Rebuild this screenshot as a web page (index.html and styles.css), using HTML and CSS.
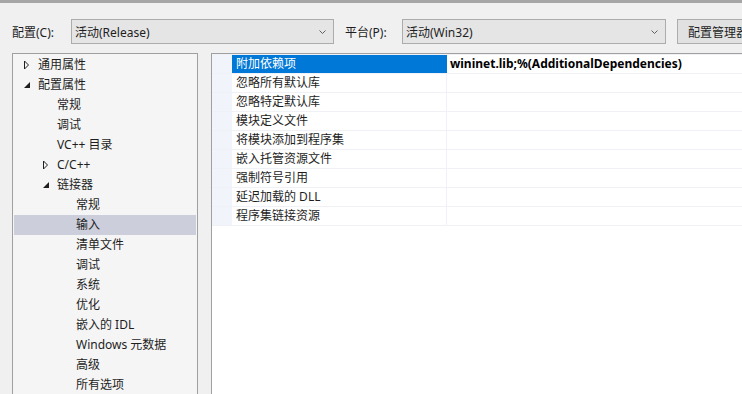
FILE: index.html
```html
<!DOCTYPE html>
<html lang="zh-CN">

<head>
    <meta charset="UTF-8">
    <title>属性页</title>
    <link rel="stylesheet" href="styles.css">
</head>

<body>
    <div class="topline"></div>
    <div class="toolbar">
        <span class="label">配置(C):</span>
        <div class="combo combo-config">
            <span>活动(Release)</span>
            <svg class="chev" width="7" height="4" viewBox="0 0 7 4"><path d="M0.5 0.5 L3.5 3.5 L6.5 0.5" fill="none" stroke="#606060" stroke-width="1"/></svg>
        </div>
        <span class="label label-plat">平台(P):</span>
        <div class="combo combo-plat">
            <span>活动(Win32)</span>
            <svg class="chev" width="7" height="4" viewBox="0 0 7 4"><path d="M0.5 0.5 L3.5 3.5 L6.5 0.5" fill="none" stroke="#606060" stroke-width="1"/></svg>
        </div>
        <button class="btn">配置管理器(O)...</button>
    </div>

    <div class="main">
        <div class="tree">
            <div class="node lvl0"><span class="tog"><svg width="6" height="10" viewBox="0 0 6 10"><path d="M0.5 1 L4.5 5 L0.5 9 Z" fill="none" stroke="#1e1e1e"/></svg></span>通用属性</div>
            <div class="node lvl0"><span class="tog"><svg width="6" height="10" viewBox="0 0 6 10"><path d="M6 2 L6 8 L0 8 Z" fill="#1e1e1e"/></svg></span>配置属性</div>
            <div class="node lvl1"><span class="tog"></span>常规</div>
            <div class="node lvl1"><span class="tog"></span>调试</div>
            <div class="node lvl1"><span class="tog"></span>VC++ 目录</div>
            <div class="node lvl1"><span class="tog"><svg width="6" height="10" viewBox="0 0 6 10"><path d="M0.5 1 L4.5 5 L0.5 9 Z" fill="none" stroke="#1e1e1e"/></svg></span>C/C++</div>
            <div class="node lvl1"><span class="tog"><svg width="6" height="10" viewBox="0 0 6 10"><path d="M6 2 L6 8 L0 8 Z" fill="#1e1e1e"/></svg></span>链接器</div>
            <div class="node lvl2"><span class="tog"></span>常规</div>
            <div class="node lvl2 sel"><span class="tog"></span>输入</div>
            <div class="node lvl2"><span class="tog"></span>清单文件</div>
            <div class="node lvl2"><span class="tog"></span>调试</div>
            <div class="node lvl2"><span class="tog"></span>系统</div>
            <div class="node lvl2"><span class="tog"></span>优化</div>
            <div class="node lvl2"><span class="tog"></span>嵌入的 IDL</div>
            <div class="node lvl2"><span class="tog"></span>Windows 元数据</div>
            <div class="node lvl2"><span class="tog"></span>高级</div>
            <div class="node lvl2"><span class="tog"></span>所有选项</div>
        </div>

        <div class="props">
            <div class="grid">
                <div class="row sel">
                    <div class="cat"></div>
                    <div class="name">附加依赖项</div>
                    <div class="value">wininet.lib;%(AdditionalDependencies)</div>
                </div>
                <div class="row">
                    <div class="cat"></div>
                    <div class="name">忽略所有默认库</div>
                    <div class="value"></div>
                </div>
                <div class="row">
                    <div class="cat"></div>
                    <div class="name">忽略特定默认库</div>
                    <div class="value"></div>
                </div>
                <div class="row">
                    <div class="cat"></div>
                    <div class="name">模块定义文件</div>
                    <div class="value"></div>
                </div>
                <div class="row">
                    <div class="cat"></div>
                    <div class="name">将模块添加到程序集</div>
                    <div class="value"></div>
                </div>
                <div class="row">
                    <div class="cat"></div>
                    <div class="name">嵌入托管资源文件</div>
                    <div class="value"></div>
                </div>
                <div class="row">
                    <div class="cat"></div>
                    <div class="name">强制符号引用</div>
                    <div class="value"></div>
                </div>
                <div class="row">
                    <div class="cat"></div>
                    <div class="name">延迟加载的 DLL</div>
                    <div class="value"></div>
                </div>
                <div class="row">
                    <div class="cat"></div>
                    <div class="name">程序集链接资源</div>
                    <div class="value"></div>
                </div>
            </div>
        </div>
    </div>
</body>

</html>
```

FILE: styles.css
```css
html,
body {
    margin: 0;
    height: 100%;
    overflow: hidden;
}

body {
    display: flex;
    flex-direction: column;
    background: #f0f0f0;
    font-family: "Noto Sans", "Noto Sans CJK SC", sans-serif;
    font-size: 12px;
    color: #1e1e1e;
}

.topline {
    flex-shrink: 0;
    height: 3px;
    background: #a6a6a6;
}

.toolbar {
    flex-shrink: 0;
    display: flex;
    align-items: center;
    height: 25px;
    margin-top: 16px;
    padding-left: 12px;
    white-space: nowrap;
}

.toolbar > * {
    flex-shrink: 0;
}

.label {
    width: 59px;
}

.label-plat {
    width: 57px;
    margin-left: 11px;
}

.combo {
    box-sizing: border-box;
    height: 25px;
    display: flex;
    align-items: center;
    justify-content: space-between;
    padding: 0 7px 0 3px;
    background: #e5e5e5;
    border: 1px solid #acacac;
}

.combo-config {
    width: 263px;
}

.combo-plat {
    width: 264px;
}

.chev {
    margin-top: 1px;
}

.btn {
    box-sizing: border-box;
    height: 25px;
    margin-left: 11px;
    padding: 0 0 0 10px;
    background: #e1e1e1;
    border: 1px solid #adadad;
    font: inherit;
    color: #1e1e1e;
    text-align: left;
    width: 120px;
}

.main {
    flex: 1;
    min-height: 0;
    display: flex;
    margin-top: 9px;
    padding-left: 12px;
}

.tree {
    box-sizing: border-box;
    flex-shrink: 0;
    width: 186px;
    padding-top: 1px;
    background: #f5f5f5;
    border: 1px solid #a0a0a0;
    border-bottom: none;
}

.node {
    height: 20px;
    line-height: 20px;
    display: flex;
    align-items: center;
    white-space: nowrap;
    margin: 0 1px;
}

.node.sel {
    background: #cccedb;
}

.lvl0 {
    padding-left: 10px;
}

.lvl1 {
    padding-left: 29px;
}

.lvl2 {
    padding-left: 48px;
}

.tog {
    width: 14px;
    height: 20px;
    display: flex;
    align-items: center;
}

.props {
    flex: 1;
    min-width: 0;
    margin-left: 13px;
    background: #ffffff;
    border-top: 1px solid #a0a0a0;
    border-left: 1px solid #a0a0a0;
}

.grid {
    border-top: 1px solid #f0f0f7;
}

.row {
    display: flex;
    height: 18px;
    line-height: 18px;
    border-bottom: 1px solid #f0f0f7;
}

.cat {
    width: 20px;
    background: #f1f4fa;
}

.name {
    box-sizing: border-box;
    width: 215px;
    padding-left: 4px;
    border-right: 1px solid #f0f0f7;
    white-space: nowrap;
}

.row.sel .name {
    background: #0078d7;
    color: #ffffff;
    border-right-color: #0078d7;
}

.value {
    flex: 1;
    padding-left: 3px;
    font-weight: bold;
    color: #000000;
    white-space: nowrap;
}
```
